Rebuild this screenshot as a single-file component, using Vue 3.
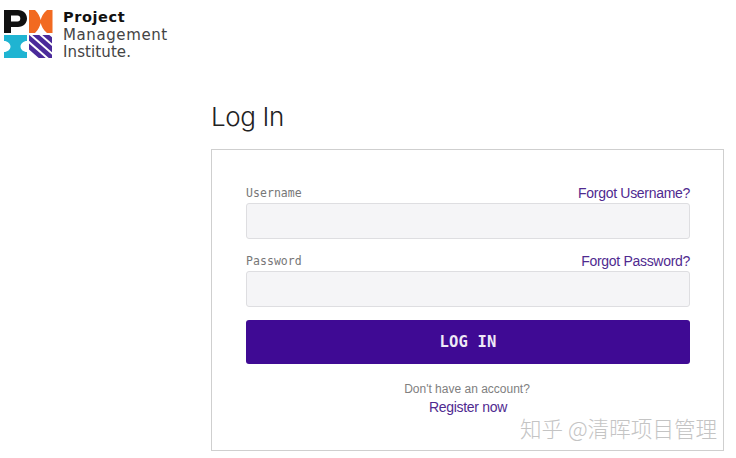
<script setup>
const stripes = [-14, -4, 6, 16]
</script>

<template>
  <div class="page">
    <header class="brand">
      <svg class="mark" width="49" height="48" viewBox="0 0 49 48" aria-hidden="true">
        <defs>
          <clipPath id="stripe-box"><rect x="25" y="25" width="23" height="23" /></clipPath>
        </defs>
        <path fill="#111" fill-rule="evenodd" d="M0 0H14C19.500 0 23 3.800 23 8.500C23 13.200 19.500 17 14 17H7V23H0ZM7 5.500V11.500H13.500C15.300 11.500 16.300 10.300 16.300 8.500C16.300 6.700 15.300 5.500 13.500 5.500Z" />
        <path fill="#f26a21" d="M25 0H31C34.500 3 35.800 7 36.700 10C37.600 7 39 3 43 0H48.500V23H43C39 20 37.600 16 36.700 13C35.800 16 34.500 20 31 23H25Z" />
        <path fill="#1fb4d2" d="M0 25H23V31C19.500 31 16.500 33.500 16.500 36.500C16.500 39.500 19.500 42 23 42V48H0V42C3.500 42 6.500 39.500 6.500 36.500C6.500 33.500 3.500 31 0 31Z" />
        <g clip-path="url(#stripe-box)" stroke="#4a2a9a" stroke-width="4.600">
          <line v-for="s in stripes" :key="s" :x1="25 + s - 5" y1="20" :x2="25 + s + 33" y2="53" />
        </g>
      </svg>
      <div class="wordmark">
        <strong>Project</strong>
        <span class="wide">Management</span>
        <span>Institute.</span>
      </div>
    </header>

    <main class="main">
      <h1>Log In</h1>
      <section class="card">
        <div class="field">
          <div class="row"><label>Username</label><a>Forgot Username?</a></div>
          <div class="input"></div>
        </div>
        <div class="field">
          <div class="row"><label>Password</label><a>Forgot Password?</a></div>
          <div class="input"></div>
        </div>
        <button type="button" class="submit">LOG IN</button>
        <p class="note">Don't have an account?</p>
        <a class="register">Register now</a>
      </section>
    </main>
    <div class="watermark">知乎 @清晖项目管理</div>
  </div>
</template>

<style scoped>
.page {
  position: relative;
  width: 736px;
  height: 458px;
  overflow: hidden;
  background: #fff;
  font-family: "Liberation Sans", Arial, sans-serif;
}
.brand {
  display: flex;
  gap: 10px;
  padding: 10px 0 0 4px;
  height: 91px;
  box-sizing: border-box;
}
.mark { flex: none; }
.wordmark {
  display: flex;
  flex-direction: column;
  margin-top: -1px;
  font-family: "DejaVu Sans", sans-serif;
  font-size: 15px;
  line-height: 17.500px;
  color: #444;
  letter-spacing: 0.1px;
}
.wordmark strong { color: #111; font-weight: 700; font-size: 14.500px; letter-spacing: 0.6px; }
.wordmark .wide { letter-spacing: 0.6px; }
.main { margin-left: 211px; width: 513px; }
h1 {
  margin: 0;
  height: 58px;
  padding-top: 9px;
  box-sizing: border-box;
  font-family: Inter, sans-serif;
  font-weight: 300;
  font-size: 26px;
  line-height: 34px;
  color: #222;
  letter-spacing: -0.4px;
}
.card {
  box-sizing: border-box;
  height: 302px;
  border: 1px solid #cfcfcf;
  padding: 34px 33px 0 34px;
  display: flex;
  flex-direction: column;
}
.field { margin-bottom: 13px; }
.row {
  display: flex;
  justify-content: space-between;
  align-items: center;
  box-sizing: border-box;
  height: 19px;
  padding-bottom: 2px;
}
label {
  font-family: "DejaVu Sans Mono", monospace;
  font-size: 11.500px;
  color: #777;
  letter-spacing: 0.05px;
}
a { color: #4f2a90; font-size: 14px; letter-spacing: -0.3px; }
.input {
  height: 36px;
  box-sizing: border-box;
  border: 1px solid #dedee1;
  border-radius: 3px;
  background: #f5f5f7;
}
.submit {
  height: 44px;
  border: 0;
  border-radius: 3px;
  background: #3f0a94;
  color: #eee8f6;
  font-family: "DejaVu Sans Mono", monospace;
  font-size: 15.500px;
  font-weight: 700;
  letter-spacing: 0.2px;
}
.note {
  margin: 18px 0 0;
  padding-right: 2px;
  text-align: center;
  font-size: 12px;
  line-height: 14px;
  color: #808080;
}
.register {
  margin-top: 2px;
  text-align: center;
  line-height: 18px;
}
.watermark {
  position: absolute;
  left: 520px;
  top: 413px;
  font-family: "Noto Sans CJK SC", sans-serif;
  font-size: 21.600px;
  font-weight: 300;
  line-height: 30px;
  white-space: nowrap;
  color: #c4c4c4;
}
</style>
